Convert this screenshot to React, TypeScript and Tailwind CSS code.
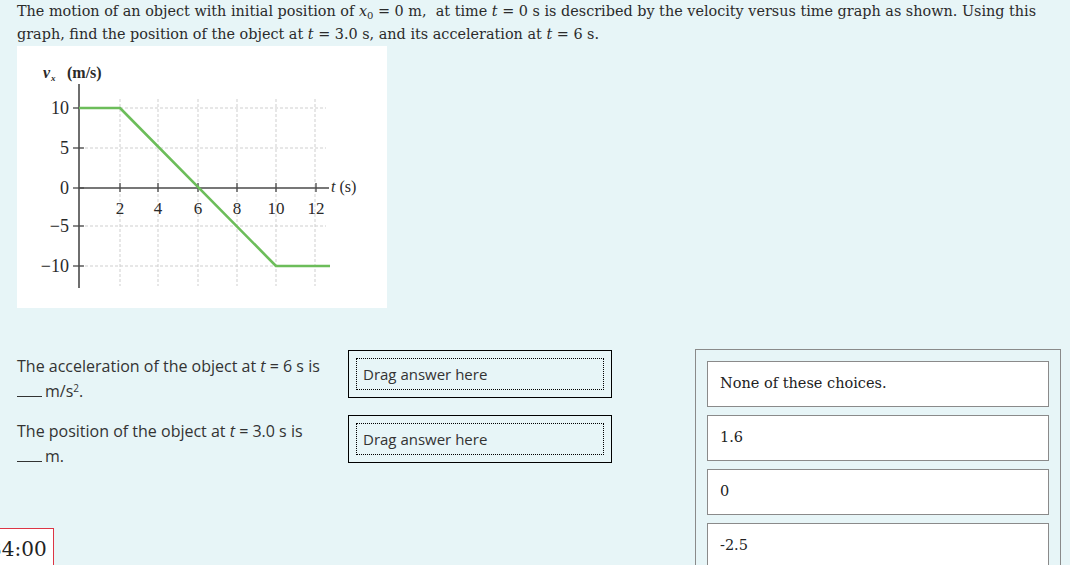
import React from 'react';

const serif = { fontFamily: '"DejaVu Serif", "Liberation Serif", serif' };
const times = '"Liberation Serif", "Times New Roman", serif';

const VelocityGraph: React.FC = () => {
  const xs = [120, 158, 198, 237, 276, 315];
  const ys = [107, 147, 225, 265];
  const tickY = [
    { y: 107, label: '10' },
    { y: 147, label: '5' },
    { y: 187, label: '0' },
    { y: 225, label: '−5' },
    { y: 265, label: '−10' },
  ];
  const tickX = [
    { x: 120, label: '2' },
    { x: 158, label: '4' },
    { x: 198, label: '6' },
    { x: 237, label: '8' },
    { x: 276, label: '10' },
    { x: 316, label: '12' },
  ];
  return (
    <svg width="370" height="262" viewBox="0 0 370 262" fontFamily={times}>
      <g transform="translate(-17 -45)">
        {/* grid */}
        {xs.map((x) => (
          <line key={'gx' + x} x1={x} y1={98} x2={x} y2={285} stroke="#cfcfcf" strokeWidth="1" strokeDasharray="3 2" />
        ))}
        {ys.map((y) => (
          <line key={'gy' + y} x1={80} y1={y} x2={326} y2={y} stroke="#cfcfcf" strokeWidth="1" strokeDasharray="3 2" />
        ))}
        {/* axes */}
        <line x1={79} y1={83} x2={79} y2={287} stroke="#4a4a4a" strokeWidth="1.6" />
        <line x1={79} y1={187} x2={329} y2={187} stroke="#4a4a4a" strokeWidth="1.6" />
        {tickY.map((t) => (
          <line key={'ty' + t.y} x1={73} y1={t.y} x2={84} y2={t.y} stroke="#4a4a4a" strokeWidth="1.3" />
        ))}
        {tickX.map((t) => (
          <line key={'tx' + t.x} x1={t.x} y1={182} x2={t.x} y2={191} stroke="#4a4a4a" strokeWidth="1.3" />
        ))}
        {/* labels */}
        <text x={43} y={77} fontSize="16" fill="#2a2a2a" fontStyle="italic" fontWeight="bold" fontFamily={times}>v</text>
        <text x={51} y={80} fontSize="9" fill="#2a2a2a" fontStyle="italic" fontWeight="bold" fontFamily={times}>x</text>
        <text x={67} y={77} fontSize="16" fill="#2a2a2a" fontWeight="bold" fontFamily={times}>(m/s)</text>
        {tickY.map((t) => (
          <text key={'ly' + t.y} x={69} y={t.y + 6} fontSize="18" fill="#2a2a2a" textAnchor="end" fontFamily={times}>
            {t.label}
          </text>
        ))}
        {tickX.map((t) => (
          <text key={'lx' + t.x} x={t.x} y={213} fontSize="17" fill="#2a2a2a" textAnchor="middle" fontFamily={times}>
            {t.label}
          </text>
        ))}
        <text x={331} y={191} fontSize="16" fill="#2a2a2a" fontFamily={times}>
          <tspan fontStyle="italic">t</tspan> (s)
        </text>
        {/* velocity */}
        <polyline
          points="79,107 120,107 276,265 330,265"
          fill="none"
          stroke="#6cbd5a"
          strokeWidth="2.6"
          strokeLinejoin="round"
        />
      </g>
    </svg>
  );
};

const DropBox: React.FC = () => (
  <div className="w-[264px] h-[48px] border border-black p-[7px]">
    <div className="h-full border border-dotted border-black flex items-center pl-[6px] text-[15px] text-[#333]">
      Drag answer here
    </div>
  </div>
);

const Choice: React.FC<{ label: string }> = ({ label }) => (
  <div className="h-[46px] bg-white border border-[#8a8a8a] flex items-center pl-[12px] text-[14.5px] text-[#222]" style={serif}>
    {label}
  </div>
);

export default function App() {
  const sans = { fontFamily: '"Open Sans", "Noto Sans", sans-serif' };
  return (
    <div className="relative w-[1070px] h-[565px] overflow-hidden bg-[#e7f5f7] text-[#333]">
      <p className="pl-[17px] pt-0 text-[14.4px] leading-[23px] text-[#2b2b2b] whitespace-nowrap" style={serif}>
        The motion of an object with initial position of <i>x</i>
        <sub className="text-[10px] leading-none">0</sub> = 0 m,&nbsp; at time <i>t</i> = 0 s is described by the
        velocity versus time graph as shown. Using this
        <br />
        graph, find the position of the object at <i>t</i> = 3.0 s, and its acceleration at <i>t</i> = 6 s.
      </p>

      <div className="ml-[17px] w-[370px] h-[262px] bg-white">
        <VelocityGraph />
      </div>

      <div className="flex mt-[41px]" style={sans}>
        <div className="pl-[17px] w-[348px] flex flex-col gap-[17px]">
          <div className="flex h-[48px]">
            <div className="w-[331px] pt-[5px] text-[16px] leading-[25px] text-[#333]">
              The acceleration of the object at <i>t</i> = 6 s is
              <br />
              <span className="inline-block w-[25px] border-b border-[#333] align-baseline mr-[3px]"></span>m/s
              <sup className="text-[10px]">2</sup>.
            </div>
          </div>
          <div className="flex h-[48px]">
            <div className="w-[331px] pt-[5px] text-[16px] leading-[25px] text-[#333]">
              The position of the object at <i>t</i> = 3.0 s is
              <br />
              <span className="inline-block w-[25px] border-b border-[#333] align-baseline mr-[3px]"></span>m.
            </div>
          </div>
        </div>

        <div className="w-[347px] flex flex-col gap-[17px] mt-px">
          <DropBox />
          <DropBox />
        </div>

        <div className="w-[366px] h-[260px] border border-[#8a8a8a] p-[11px] flex flex-col gap-[8px]">
          <Choice label="None of these choices." />
          <Choice label="1.6" />
          <Choice label="0" />
          <Choice label="-2.5" />
        </div>
      </div>

      <div
        className="absolute left-[-16px] top-[528px] w-[70px] h-[50px] bg-white border border-[#dc3545] pt-[5px] pl-[4px] text-[20px] text-[#222]"
        style={serif}
      >
        34:00
      </div>
    </div>
  );
}
